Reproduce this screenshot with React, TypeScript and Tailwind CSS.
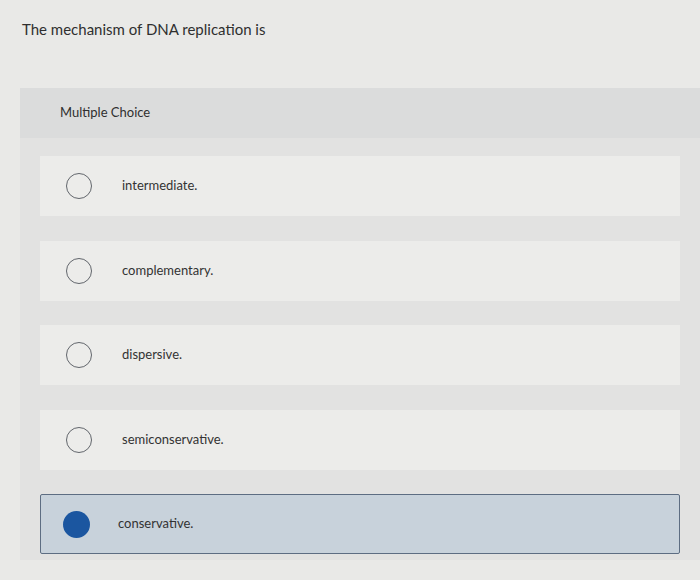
import { FC } from 'react';

type OptionProps = {
  label: string;
  selected?: boolean;
};

const options = ['intermediate.', 'complementary.', 'dispersive.', 'semiconservative.', 'conservative.'];

const Option: FC<OptionProps> = ({ label, selected }) => {
  return selected ? (
    <div className="flex h-[60px] items-center rounded-[2px] border border-[#5d6d82] bg-[#c8d2db] pl-[22px]">
      <span className="h-[27px] w-[27px] rounded-full bg-[#1b56a0]" />
      <span className="ml-[28px] text-[13px] text-[#333]">{label}</span>
    </div>
  ) : (
    <div className="flex h-[60px] items-center bg-[#ececea] pl-[26px]">
      <span className="h-[26px] w-[26px] rounded-full border-[1.5px] border-[#62666c]" />
      <span className="ml-[30px] text-[13px] text-[#333]">{label}</span>
    </div>
  );
};

const App: FC = () => {
  return (
    <div className="h-[580px] w-[700px] overflow-hidden bg-[#e9e9e7] pt-[19px] font-['Lato',sans-serif]">
      <h1 className="pl-[22px] text-[15px] leading-[20px] text-[#2f2f2f]">The mechanism of DNA replication is</h1>
      <div className="ml-[20px] mt-[49px] bg-[#e2e2e1] pb-[6px]">
        <div className="flex h-[50px] items-center bg-[#dbdcdc] pl-[40px] text-[13px] text-[#2f2f2f]">
          Multiple Choice
        </div>
        <div className="flex flex-col gap-[24.5px] pl-[20px] pr-[20px] pt-[18px]">
          {options.map((o, i) => (
            <Option key={o} label={o} selected={i === options.length - 1} />
          ))}
        </div>
      </div>
    </div>
  );
};

export default App;
